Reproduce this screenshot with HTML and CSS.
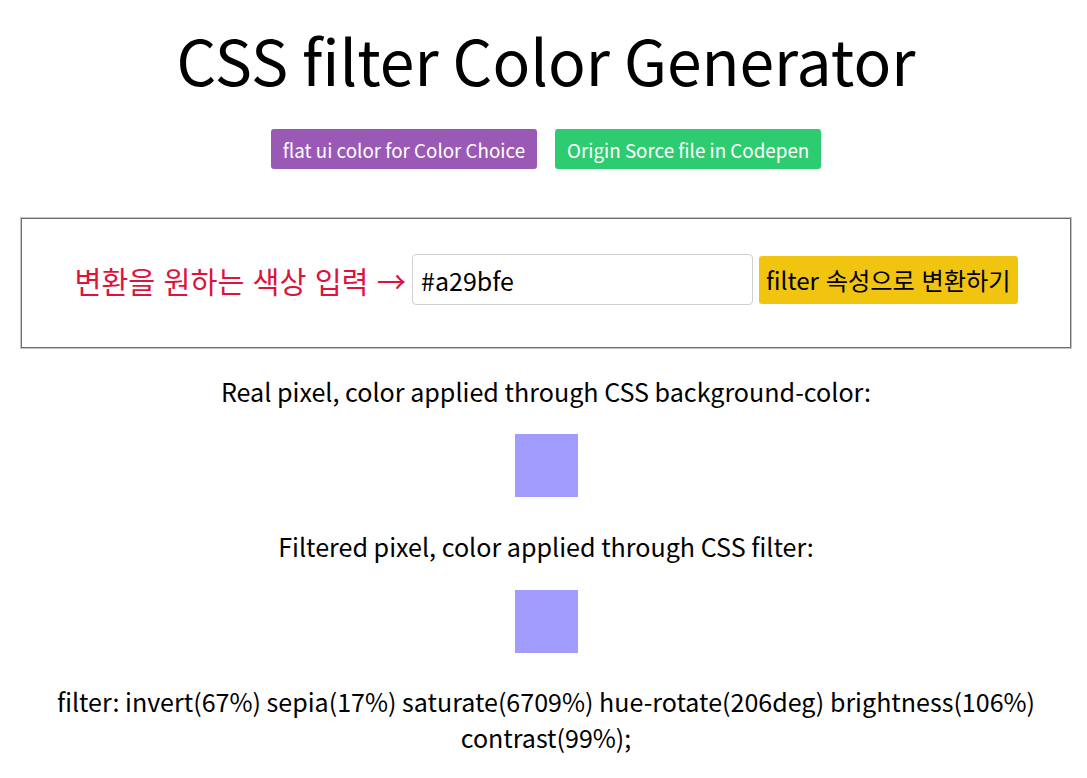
FILE: index.html
```html
<!DOCTYPE html>
<html lang="en">
<head>
<meta charset="utf-8">
<title>CSS filter Color Generator</title>
<link rel="stylesheet" href="styles.css">
</head>
<body>
<main class="page">
  <h1 class="title">CSS filter Color Generator</h1>
  <div class="links">
    <a class="link link-purple" href="#">flat ui color for Color Choice</a>
    <a class="link link-green" href="#">Origin Sorce file in Codepen</a>
  </div>
  <div class="panel">
    <div class="row">
      <span class="label" lang="ko">변환을 원하는 색상 입력 →</span>
      <input class="color-input" type="text" value="#a29bfe">
      <button class="convert" lang="ko">filter 속성으로 변환하기</button>
    </div>
  </div>
  <p class="caption caption-real">Real pixel, color applied through CSS background-color:</p>
  <div class="pixel"></div>
  <p class="caption caption-filtered">Filtered pixel, color applied through CSS filter:</p>
  <div class="pixel"></div>
  <p class="result">filter: invert(67%) sepia(17%) saturate(6709%) hue-rotate(206deg) brightness(106%) contrast(99%);</p>
</main>
</body>
</html>
```
FILE: styles.css
```css
html, body {
  margin: 0;
  padding: 0;
  background: #fff;
}
body {
  font-family: "Noto Sans CJK KR", "Source Sans Pro", "Noto Sans", sans-serif;
  color: #000;
}
.page {
  width: 1050px;
  margin-left: 21px;
}
.title {
  margin: 0;
  padding-top: 22px;
  font-size: 62.4px;
  font-weight: 400;
  line-height: 74px;
  text-align: center;
}
.links {
  display: flex;
  justify-content: center;
  gap: 18px;
  margin-top: 33px;
}
.link {
  display: flex;
  align-items: center;
  justify-content: center;
  height: 40px;
  padding: 0 12px;
  border-radius: 3px;
  color: #fff;
  font-size: 18.8px;
  white-space: nowrap;
  text-decoration: none;
}
.link-purple { background: #9b59b6; }
.link-green { background: #2ecc71; }
.panel {
  box-sizing: border-box;
  width: 1050px;
  height: 130px;
  margin-top: 49px;
  padding-bottom: 7px;
  border: 1px solid #6f6f6f;
  box-shadow: 0 0 0 1px #c4c4c4;
  display: flex;
  align-items: center;
  justify-content: center;
}
.row {
  display: flex;
  align-items: center;
  gap: 6px;
}
.label {
  color: #dc143c;
  font-size: 29.3px;
  white-space: nowrap;
}
.color-input {
  box-sizing: border-box;
  width: 341px;
  height: 51px;
  padding: 0 8px;
  border: 1px solid #cfcfcf;
  border-radius: 4px;
  font-family: inherit;
  font-size: 25px;
  color: #000;
  outline: none;
}
.convert {
  box-sizing: border-box;
  height: 48px;
  padding: 0 7px;
  border: none;
  border-radius: 3px;
  background: #f1c40f;
  color: #000;
  font-family: inherit;
  font-size: 24.2px;
  white-space: nowrap;
}
.caption {
  margin: 0;
  text-align: center;
  font-size: 25.1px;
  line-height: 36px;
}
.caption-real { margin-top: 25px; }
.caption-filtered { margin-top: 31px; }
.pixel {
  width: 63px;
  height: 63px;
  margin: 25px auto 0;
  background: #a29bfe;
}
.caption-filtered + .pixel { margin-top: 26px; }
.result {
  margin: 30px 0 0;
  text-align: center;
  font-size: 25.05px;
  line-height: 36px;
}
```
